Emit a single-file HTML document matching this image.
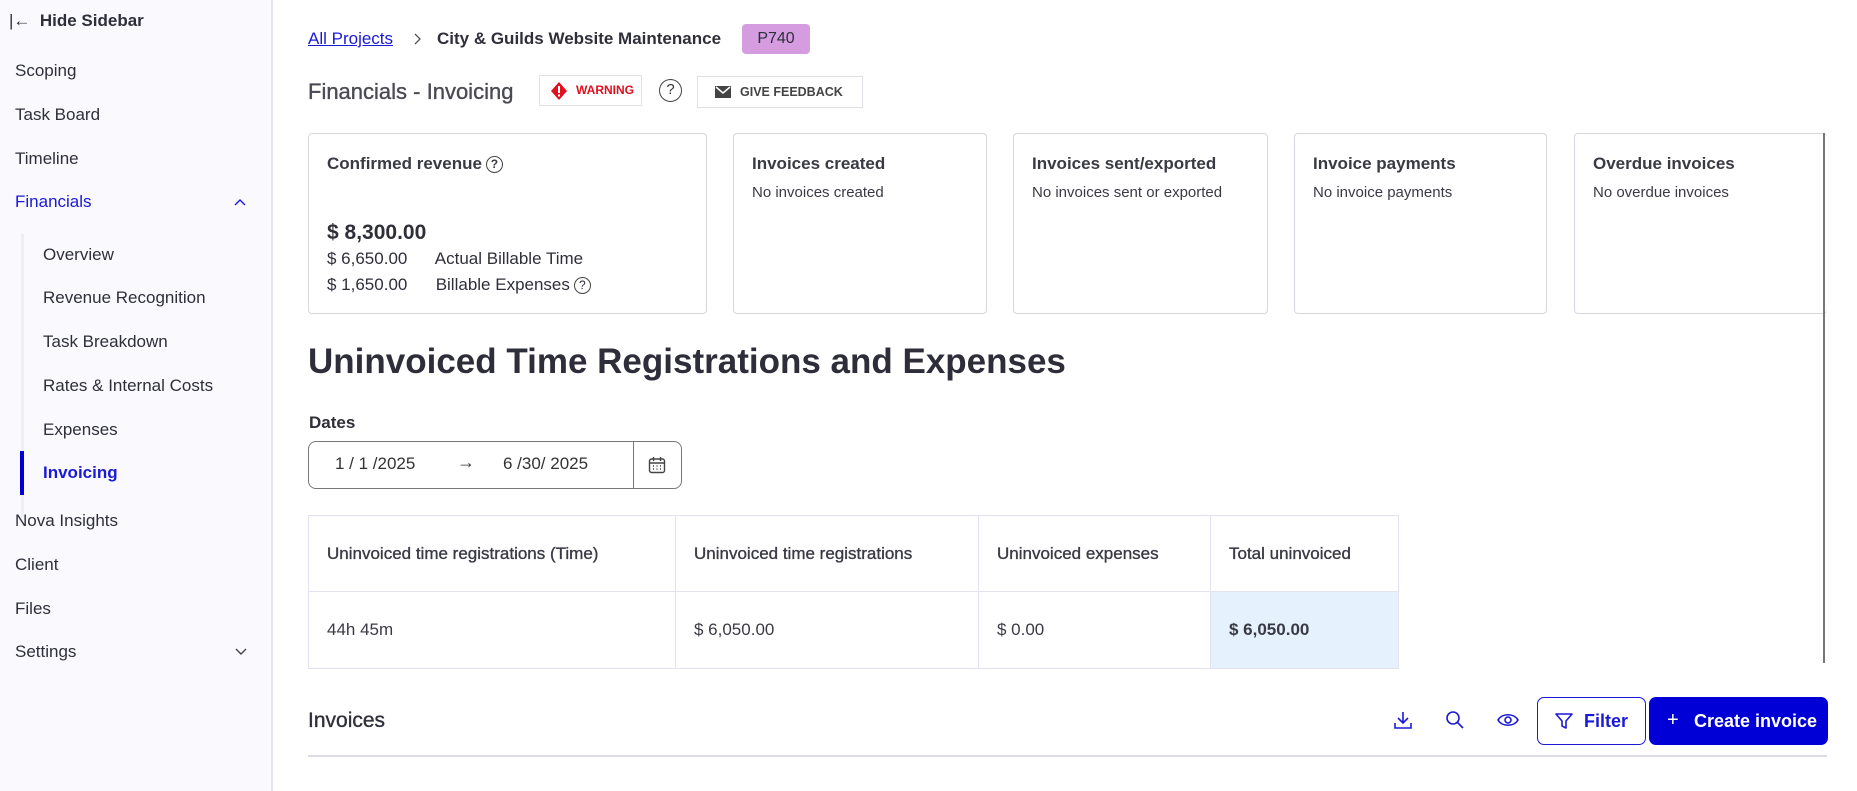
<!DOCTYPE html>
<html><head><meta charset="utf-8"><style>
*{box-sizing:border-box;margin:0;padding:0}
body{width:1857px;height:791px;overflow:hidden;background:#fff;font-family:"Liberation Sans",sans-serif;color:#2f2f3a;position:relative}
.a{position:absolute;white-space:nowrap}
.m{-webkit-text-stroke:0.35px currentColor}
#sb{position:absolute;left:0;top:0;width:273px;height:791px;background:#f9f9fe;border-right:2px solid #e4e4ee}
.si{position:absolute;left:15px;font-size:17px;color:#2f2f3a;transform:translateY(-50%)}
.sub{left:43px}
.card{position:absolute;top:133px;height:181px;border:1px solid #d6d6e0;border-radius:4px;background:#fff}
.ct{position:absolute;left:18px;top:20px;font-size:17px;font-weight:bold;color:#3a3a44}
.cs{position:absolute;left:18px;top:50px;font-size:15px;color:#3a3a44}
.q{display:inline-block;width:17px;height:17px;border:1.5px solid #444;border-radius:50%;font-size:12px;text-align:center;line-height:14px;vertical-align:1px;margin-left:4px}
td{border:1px solid #e3e3ef;font-size:17px;padding:0 18px;color:#3a3a44}
tr:first-child td{-webkit-text-stroke:0.35px #3a3a44}
</style></head><body>
<div id="sb">
<div class="si" style="top:21px;left:9px;font-weight:bold"><span style="font-weight:normal">|←</span>&nbsp; Hide Sidebar</div>
<div class="si" style="top:71px">Scoping</div>
<div class="si" style="top:115px">Task Board</div>
<div class="si" style="top:159px">Timeline</div>
<div class="si" style="top:202px;color:#1a1ad6">Financials</div>
<svg class="a" style="left:234px;top:198px" width="12" height="8"><path d="M1 7l5-5 5 5" fill="none" stroke="#1a1ad6" stroke-width="1.4"/></svg>
<div class="a" style="left:21px;top:234px;width:3px;height:283px;background:#eeeef6"></div>
<div class="a" style="left:20px;top:451px;width:4px;height:44px;background:#0000d6"></div>
<div class="si sub" style="top:255px">Overview</div>
<div class="si sub" style="top:298px">Revenue Recognition</div>
<div class="si sub" style="top:342px">Task Breakdown</div>
<div class="si sub" style="top:386px">Rates &amp; Internal Costs</div>
<div class="si sub" style="top:430px">Expenses</div>
<div class="si sub" style="top:473px;color:#1a1ad6;font-weight:bold">Invoicing</div>
<div class="si" style="top:521px">Nova Insights</div>
<div class="si" style="top:565px">Client</div>
<div class="si" style="top:609px">Files</div>
<div class="si" style="top:652px">Settings</div>
<svg class="a" style="left:235px;top:648px" width="12" height="8"><path d="M1 1l5 5 5-5" fill="none" stroke="#444" stroke-width="1.4"/></svg>
</div>

<div class="a" style="left:308px;top:29px;font-size:17px;color:#1a1ad6;text-decoration:underline">All Projects</div>
<svg class="a" style="left:414px;top:33px" width="8" height="12"><path d="M1 1l5 5-5 5" fill="none" stroke="#555" stroke-width="1.3"/></svg>
<div class="a" style="left:437px;top:29px;font-size:17px;font-weight:bold">City &amp; Guilds Website Maintenance</div>
<div class="a" style="left:742px;top:24px;width:68px;height:30px;background:#d59ce0;border-radius:4px;font-size:16px;text-align:center;line-height:30px">P740</div>

<div class="a m" style="left:308px;top:79px;font-size:22px;color:#4a4a52">Financials - Invoicing</div>
<div class="a" style="left:539px;top:75px;width:103px;height:31px;border:1px solid #e0e0e6;"></div>
<svg class="a" style="left:550px;top:81px" width="18" height="20"><path d="M9 1L17 10 9 19 1 10z" fill="#e0101e"/><rect x="8" y="5" width="2" height="7" fill="#fff"/><rect x="8" y="13.5" width="2" height="2" fill="#fff"/></svg>
<div class="a" style="left:576px;top:83px;font-size:12px;font-weight:bold;color:#e0101e">WARNING</div>
<div class="a" style="left:659px;top:79px;width:23px;height:23px;border:1.5px solid #444;border-radius:50%;font-size:15px;text-align:center;line-height:20px">?</div>
<div class="a" style="left:697px;top:76px;width:166px;height:32px;border:1px solid #e0e0e6"></div>
<svg class="a" style="left:715px;top:86px" width="16" height="12"><rect width="16" height="12" fill="#444"/><path d="M1 1l7 6 7-6" fill="none" stroke="#fff" stroke-width="1.5"/></svg>
<div class="a" style="left:740px;top:85px;font-size:12.5px;font-weight:bold;color:#444">GIVE FEEDBACK</div>

<div class="card" style="left:308px;width:399px">
<div class="ct">Confirmed revenue<span class="q">?</span></div>
<div class="a" style="left:18px;top:87px;font-size:21px;font-weight:bold">$ 8,300.00</div>
<div class="a" style="left:18px;top:115px;font-size:17px">$ 6,650.00 &nbsp;&nbsp;&nbsp;&nbsp; Actual Billable Time</div>
<div class="a" style="left:18px;top:141px;font-size:17px">$ 1,650.00 &nbsp;&nbsp;&nbsp;&nbsp; Billable Expenses<span class="q">?</span></div>
</div>
<div class="card" style="left:733px;width:254px"><div class="ct">Invoices created</div><div class="cs">No invoices created</div></div>
<div class="card" style="left:1013px;width:255px"><div class="ct">Invoices sent/exported</div><div class="cs">No invoices sent or exported</div></div>
<div class="card" style="left:1294px;width:253px"><div class="ct">Invoice payments</div><div class="cs">No invoice payments</div></div>
<div class="card" style="left:1574px;width:253px;border-right:none"><div class="ct">Overdue invoices</div><div class="cs">No overdue invoices</div></div>
<div class="a" style="left:1823px;top:133px;width:2px;height:530px;background:#777"></div>

<div class="a" style="left:308px;top:342px;font-size:35px;font-weight:bold;color:#2e2e3a">Uninvoiced Time Registrations and Expenses</div>
<div class="a" style="left:309px;top:413px;font-size:17px;font-weight:bold">Dates</div>
<div class="a" style="left:308px;top:441px;width:374px;height:48px;border:1px solid #777;border-radius:8px"></div>
<div class="a" style="left:633px;top:442px;width:1px;height:46px;background:#777"></div>
<div class="a" style="left:335px;top:454px;font-size:17px;color:#333">1 / 1 /2025</div>
<div class="a" style="left:457px;top:452px;font-size:18px;color:#333">→</div>
<div class="a" style="left:503px;top:454px;font-size:17px;color:#333">6 /30/ 2025</div>
<svg class="a" style="left:648px;top:456px" width="18" height="18"><rect x="1.5" y="3" width="15" height="13.5" rx="2" fill="none" stroke="#444" stroke-width="1.4"/><path d="M1.5 7h15M5.5 1v4M12.5 1v4" stroke="#444" stroke-width="1.4"/><path d="M5 10h1M8.5 10h1M12 10h1M5 13h1M8.5 13h1M12 13h1" stroke="#444" stroke-width="1.4"/></svg>

<table class="a" style="left:308px;top:515px;border-collapse:collapse;width:1091px">
<tr style="height:76px"><td style="width:367px">Uninvoiced time registrations (Time)</td><td style="width:303px">Uninvoiced time registrations</td><td style="width:232px">Uninvoiced expenses</td><td>Total uninvoiced</td></tr>
<tr style="height:77px"><td>44h 45m</td><td>$ 6,050.00</td><td>$ 0.00</td><td style="background:#e5f2fd;font-weight:bold">$ 6,050.00</td></tr>
</table>

<div class="a m" style="left:308px;top:709px;font-size:21px;color:#2f2f3a">Invoices</div>
<div class="a" style="left:308px;top:755px;width:1519px;height:2px;background:#dcdce6"></div>
<svg class="a" style="left:1393px;top:710px" width="20" height="20"><path d="M10 2v11M5 8l5 5 5-5M2 13v5h16v-5" fill="none" stroke="#1a1ad6" stroke-width="1.6"/></svg>
<svg class="a" style="left:1445px;top:710px" width="20" height="20"><circle cx="8" cy="8" r="6" fill="none" stroke="#1a1ad6" stroke-width="1.6"/><path d="M12.5 12.5L18 18" stroke="#1a1ad6" stroke-width="1.6"/></svg>
<svg class="a" style="left:1497px;top:712px" width="22" height="16"><path d="M1 8C5 1 17 1 21 8 17 15 5 15 1 8z" fill="none" stroke="#1a1ad6" stroke-width="1.6"/><circle cx="11" cy="8" r="3" fill="none" stroke="#1a1ad6" stroke-width="1.6"/></svg>
<div class="a" style="left:1537px;top:697px;width:109px;height:48px;border:1.5px solid #1a1ad6;border-radius:7px"></div>
<svg class="a" style="left:1555px;top:712px" width="18" height="18"><path d="M1 2h16l-6 7v7l-4-2V9z" fill="none" stroke="#1a1ad6" stroke-width="1.6" stroke-linejoin="round"/></svg>
<div class="a" style="left:1584px;top:711px;font-size:18px;font-weight:bold;color:#1a1ad6">Filter</div>
<div class="a" style="left:1649px;top:697px;width:179px;height:48px;background:#0000d6;border-radius:7px"></div>
<div class="a" style="left:1667px;top:709px;font-size:20px;color:#fff">+</div>
<div class="a" style="left:1694px;top:711px;font-size:18px;font-weight:bold;color:#fff">Create invoice</div>
</body></html>
